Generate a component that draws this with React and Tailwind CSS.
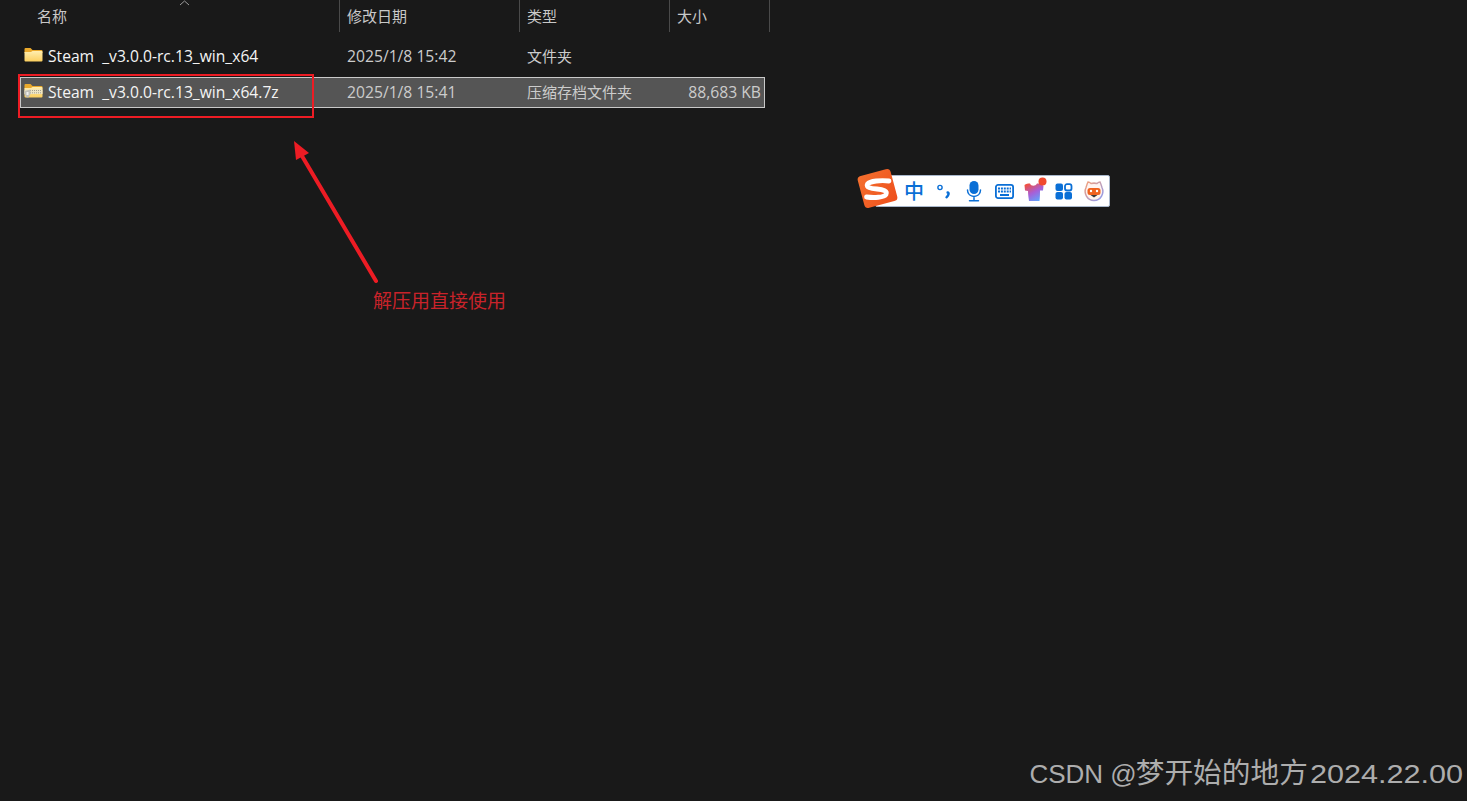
import React from "react";

const cols = "grid grid-cols-[320px_180px_150px_95px] items-center";
const uiFont = "font-['Open_Sans','Noto_Sans_CJK_SC',sans-serif]";

function Folder({ zip }) {
  const id = zip ? "fz" : "fp";
  return (
    <svg width="19" height="16" viewBox="0 0 19 16" className="shrink-0 mt-[-4px]">
      <defs>
        <linearGradient id={id} x1="0" y1="0" x2="0" y2="1">
          <stop offset="0" stopColor="#ffeeb0" />
          <stop offset="1" stopColor="#fbcf5f" />
        </linearGradient>
      </defs>
      <path d="M0.5 2 Q0.5 1 1.5 1 H6.5 L8.5 3 H17.5 Q18.5 3 18.5 4 V6 H0.5 Z" fill="#eaa92c" />
      <path d="M0.5 5 H7 L8.5 4 H17.5 Q18.5 4 18.5 5 V13.5 Q18.5 14.5 17.5 14.5 H1.5 Q0.5 14.5 0.5 13.5 Z" fill={`url(#${id})`} />
      {zip && (
        <g>
          <rect x="0.5" y="6.5" width="18" height="4.5" fill="#efe6c6" />
          <path d="M6 7.5 H18 M6 9.8 H18" stroke="#a39f8c" strokeWidth="1" strokeDasharray="1 1" />
          <path d="M0.5 8 L6.5 6.5 V11 L4.5 14.5 H2.5 L0.5 11 Z" fill="#c2c0b8" />
          <rect x="2.5" y="9" width="2" height="3" fill="#f0f0f0" />
        </g>
      )}
    </svg>
  );
}

function Header() {
  const cell = "h-[32px] flex items-center border-r border-[#4a4a4a]";
  return (
    <div className="grid grid-cols-[320px_180px_150px_100px] items-center w-[750px] text-[#c8c8c8] text-[15px] relative">
      <div className={`${cell} pl-[17px]`}>名称</div>
      <div className={`${cell} pl-[7px]`}>修改日期</div>
      <div className={`${cell} pl-[7px]`}>类型</div>
      <div className={`${cell} pl-[7px]`}>大小</div>
      <svg width="11" height="6" viewBox="0 0 11 6" className="absolute left-[159px] top-0">
        <path d="M1 5 L5.5 1 L10 5" fill="none" stroke="#9a9a9a" strokeWidth="1" />
      </svg>
    </div>
  );
}

function Row({ name, date, type, size, selected, zip }) {
  return (
    <div className={`${cols} w-[745px] h-[31px] pt-[1px] border ${selected ? "bg-[#555555] border-[#c9c9c9]" : "border-transparent"}`}>
      <div className="flex items-center pl-[3px] gap-[5px] text-[15.65px] text-[#f4f4f4] whitespace-pre">
        <Folder zip={zip} />
        <span>{name}</span>
      </div>
      <div className="pl-[6px] text-[15.7px] text-[#cccccc]">{date}</div>
      <div className="pl-[6px] mt-[-2px] text-[15px] text-[#cccccc]">{type}</div>
      <div className="text-right pr-[5px] text-[15.7px] text-[#cccccc] whitespace-nowrap">{size}</div>
    </div>
  );
}

function SLogo() {
  return (
    <svg width="42" height="42" viewBox="0 0 42 42" className="absolute left-[-19px] top-[-8px]">
      <defs>
        <linearGradient id="sg" x1="0" y1="0" x2="1" y2="1">
          <stop offset="0" stopColor="#f4702e" />
          <stop offset="1" stopColor="#ee4f1c" />
        </linearGradient>
      </defs>
      <rect x="3.5" y="4" width="34" height="33" rx="4" fill="url(#sg)" transform="rotate(-15 20.5 20.5)" />
      <path d="M32 13 C24 12 13 13 10.5 16 C8.5 19.5 14 20.5 20 21 C26 21.5 31 23 29 26.5 C27 29.5 17 30 9.5 29" fill="none" stroke="#ffffff" strokeWidth="4.8" strokeLinecap="round" />
    </svg>
  );
}

function ImeBar() {
  const blue = "#0a6fd6";
  return (
    <div className="absolute left-[875px] top-[175px] w-[235px] h-[32px] bg-white rounded-[2px] border border-[#a9b8cc] flex items-center pl-[23px]">
      <SLogo />
      <div className="w-[30px] flex justify-center text-[20px] leading-none font-medium text-[#0a6fd6] font-['Noto_Sans_CJK_SC',sans-serif]">中</div>
      <div className="w-[30px] flex justify-center">
        <svg width="18" height="16" viewBox="0 0 18 16">
          <circle cx="5" cy="4.5" r="2.1" fill="none" stroke={blue} strokeWidth="1.4" />
          <path d="M12.6 9.5 C14.2 9.5 14 12 11.5 14.3" fill="none" stroke={blue} strokeWidth="2.4" strokeLinecap="round" />
        </svg>
      </div>
      <div className="w-[30px] flex justify-center">
        <svg width="18" height="22" viewBox="0 0 18 22">
          <rect x="4.5" y="1" width="9" height="13" rx="4.5" fill={blue} />
          <path d="M2.5 10 C2.5 18.5 15.5 18.5 15.5 10 M9 16.5 V20 M4.5 20.7 H13.5" fill="none" stroke={blue} strokeWidth="1.5" strokeLinecap="round" />
        </svg>
      </div>
      <div className="w-[30px] flex justify-center">
        <svg width="19" height="15" viewBox="0 0 19 15">
          <rect x="0.9" y="0.9" width="17.2" height="13.2" rx="2.2" fill="none" stroke={blue} strokeWidth="1.8" />
          <path d="M3 4.5 H16 M3 7.4 H16" stroke={blue} strokeWidth="2" strokeDasharray="2 0.9" />
          <path d="M5 11 H14" stroke={blue} strokeWidth="2" />
        </svg>
      </div>
      <div className="w-[30px] flex justify-center">
        <svg width="24" height="26" viewBox="0 0 24 26" className="mt-[-3px] ml-[1px]">
          <defs>
            <linearGradient id="ts" x1="0.2" y1="0" x2="0.8" y2="1">
              <stop offset="0" stopColor="#f2503c" />
              <stop offset="0.5" stopColor="#a75fd8" />
              <stop offset="1" stopColor="#5aa8ff" />
            </linearGradient>
          </defs>
          <path d="M1.5 8 C3 6.5 5 6.5 7 6.5 C8 9.5 12.5 9.5 14 6.5 C16 6.5 19 7 20.5 9 L20 13.5 L17 13.5 C17 17 17 20 16.5 24 H6 C5.5 20 5 17 5 14 L2 13.5 Z" fill="url(#ts)" />
          <circle cx="19.5" cy="4.5" r="4" fill="#f1492e" />
        </svg>
      </div>
      <div className="w-[30px] flex justify-center">
        <svg width="18" height="17" viewBox="0 0 18 17">
          <rect x="0.5" y="0.5" width="7.5" height="7.5" rx="2" fill={blue} />
          <rect x="10" y="1.2" width="6.5" height="6.3" rx="2" fill="none" stroke={blue} strokeWidth="1.8" />
          <rect x="0.5" y="9" width="7.5" height="7.5" rx="2" fill={blue} />
          <rect x="9.5" y="9" width="7.5" height="7.5" rx="2" fill={blue} />
        </svg>
      </div>
      <div className="w-[30px] flex justify-center">
        <svg width="22" height="24" viewBox="0 0 22 24">
          <defs>
            <linearGradient id="fx" x1="0" y1="0" x2="1" y2="1">
              <stop offset="0" stopColor="#f6a078" />
              <stop offset="1" stopColor="#8a9cf4" />
            </linearGradient>
          </defs>
          <path d="M5 3 C6.5 3 7.5 4 8 4.5 C10 4 12 4 14 4.5 C14.5 4 15.5 3 17 3 C18 5 18.5 7 19 8.5 C21.5 14 18 21.5 11 21.5 C4 21.5 0.5 14 3 8.5 C3.5 7 4 5 5 3 Z" fill="#fff4f1" stroke="url(#fx)" strokeWidth="1.5" />
          <rect x="4.5" y="9" width="13" height="7" rx="2.5" fill="#f0621f" />
          <circle cx="8" cy="12" r="1.2" fill="#fff" />
          <circle cx="14" cy="12" r="1.2" fill="#fff" />
          <path d="M7.5 16 H14.5 L11 18.5 Z" fill="#3a3a3a" />
        </svg>
      </div>
    </div>
  );
}

export default function App() {
  return (
    <div className={`relative w-[1467px] h-[801px] overflow-hidden bg-[#191919] ${uiFont} text-[15px]`}>
      <div className="pl-[20px]">
        <Header />
        <div className="mt-[9px] flex flex-col gap-[5px]">
          <Row name="Steam  _v3.0.0-rc.13_win_x64" date="2025/1/8 15:42" type="文件夹" />
          <Row name="Steam  _v3.0.0-rc.13_win_x64.7z" date="2025/1/8 15:41" type="压缩存档文件夹" size="88,683 KB" selected zip />
        </div>
      </div>

      <div className="absolute left-[18px] top-[74px] w-[296px] h-[44px] border-2 border-[#ed1c24]" />

      <svg width="100" height="150" viewBox="0 0 100 150" className="absolute left-[285px] top-[135px]">
        <path d="M91 146 L17 21" stroke="#ed1c24" strokeWidth="4" strokeLinecap="round" />
        <path d="M9 6 L24 18 L11 25 Z" fill="#ed1c24" />
      </svg>

      <div className="absolute left-[373px] top-[288px] text-[19px] leading-[26px] text-[#c8232a] whitespace-nowrap">解压用直接使用</div>

      <ImeBar />

      <div className="absolute right-[4px] top-[753px] h-[38px] flex items-baseline text-[26px] leading-[38px] text-[#adadad] whitespace-pre font-['Liberation_Sans','Noto_Sans_CJK_SC',sans-serif]">
        <span>CSDN @</span>
        <span className="text-[28.7px] ml-[-1px] mr-[2px]">梦开始的地方</span>
        <span className="text-[30.6px] inline-block scale-y-[0.87] origin-[50%_75%]">2024.22.00</span>
      </div>
    </div>
  );
}
